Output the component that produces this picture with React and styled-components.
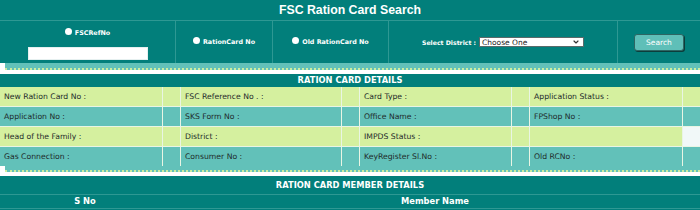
import styled, { createGlobalStyle } from 'styled-components';
import { ChevronDown } from 'lucide-react';

const GlobalStyle = createGlobalStyle`
  * { box-sizing: border-box; }
  body {
    margin: 0;
    background: #fff;
    font-family: 'DejaVu Sans', Verdana, sans-serif;
  }
`;

const Page = styled.div`
  width: 700px;
`;

const SearchPanel = styled.div`
  background: #027f7b;
`;

const Title = styled.h1`
  margin: 0;
  height: 21px;
  line-height: 20px;
  text-align: center;
  font-family: 'Liberation Sans', Arial, sans-serif;
  font-weight: 700;
  font-size: 12.3px;
  color: #fff;
  border-bottom: 1px solid #2e9893;
`;

const SearchRow = styled.div`
  display: grid;
  grid-template-columns: 176px 97px 116px 229px 82px;
  height: 42px;
`;

const SearchCell = styled.div`
  display: flex;
  flex-direction: column;
  align-items: center;
  justify-content: ${(p) => (p.$top ? 'flex-start' : 'center')};
  padding-top: ${(p) => (p.$top ? '7px' : '0')};
  gap: 9px;
  border-right: ${(p) => (p.$last ? 'none' : '1px solid #2e9893')};
`;

const RadioOption = styled.label`
  display: flex;
  align-items: center;
  gap: 3px;
  font-weight: 700;
  font-size: 6.4px;
  line-height: 8px;
  color: #fff;
`;

const Radio = styled.input`
  appearance: none;
  margin: 0 0 3px 0;
  width: 7px;
  height: 7px;
  border-radius: 50%;
  background: #fff;
`;

const RefInput = styled.input`
  width: 120px;
  height: 13px;
  margin: 0;
  border: 1px solid #e6f0f0;
  background: #fff;
`;

const DistrictPicker = styled.div`
  display: flex;
  align-items: center;
  gap: 3px;
`;

const FieldLabel = styled.span`
  font-weight: 700;
  font-size: 6.2px;
  color: #fff;
`;

const FakeSelect = styled.div`
  display: flex;
  align-items: center;
  justify-content: space-between;
  width: 105px;
  height: 10px;
  padding: 0 3px 0 2px;
  background: #fff;
  border: 1px solid #5a6a6a;
  font-size: 7.5px;
  color: #222;
`;

const SearchButton = styled.button`
  width: 50px;
  height: 17px;
  padding: 0;
  border: 1px solid #2d6663;
  border-radius: 3px;
  background: #5fbfb8;
  box-shadow: 1px 1px 0 #0c3d3b;
  font-family: 'DejaVu Sans', Verdana, sans-serif;
  font-size: 7.5px;
  color: #fff;
`;

const Band = styled.div`
  height: ${(p) => p.$h}px;
  margin: 0 0 4px 5px;
  background: #62c1b9;
  border-bottom: 2px dotted #cdeda0;
`;

const Caption = styled.div`
  height: ${(p) => p.$h}px;
  line-height: ${(p) => p.$h}px;
  background: #027f7b;
  text-align: center;
  font-weight: 700;
  font-size: 8.3px;
  color: #fff;
`;

const DetailsGrid = styled.div`
  display: grid;
  grid-template-columns: 162px 17px 160px 17px 151px 17px 152px 17px;
  grid-auto-rows: 19px;
  gap: 1px;
  background: #e9f5e4;
`;

const tones = {
  green: '#d5f09f',
  teal: '#62c1b9',
  blank: '#f1f8f8',
};

const Cell = styled.div`
  padding-left: 4px;
  line-height: 19px;
  background: ${(p) => tones[p.$tone]};
  font-size: 7.7px;
  color: #1e2a2a;
  white-space: nowrap;
`;

const MemberSection = styled.div`
  background: #027f7b;
  padding-bottom: 2px;
`;

const MemberHeader = styled.div`
  display: grid;
  grid-template-columns: 170px 530px;
  height: 15px;
  border-top: 1px solid #2e9893;
  border-bottom: 1px solid #2e9893;
`;

const HeaderCell = styled.div`
  text-align: center;
  line-height: 13px;
  font-weight: 700;
  font-size: 8.3px;
  color: #fff;
`;

const rows = [
  { tone: 'green', cells: ['New Ration Card No :', 'FSC Reference No . :', 'Card Type :', 'Application Status :'] },
  { tone: 'teal', cells: ['Application No :', 'SKS Form No :', 'Office Name :', 'FPShop No :'] },
  { tone: 'green', cells: ['Head of the Family :', 'District :', 'IMPDS Status :', ''], lastBlank: true },
  { tone: 'teal', cells: ['Gas Connection :', 'Consumer No :', 'KeyRegister Sl.No :', 'Old RCNo :'] },
];

const App = () => {
  return (
    <Page>
      <GlobalStyle />
      <SearchPanel>
        <Title>FSC Ration Card Search</Title>
        <SearchRow>
          <SearchCell $top>
            <RadioOption>
              <Radio type="radio" name="by" />
              FSCRefNo
            </RadioOption>
            <RefInput type="text" />
          </SearchCell>
          <SearchCell>
            <RadioOption>
              <Radio type="radio" name="by" />
              RationCard No
            </RadioOption>
          </SearchCell>
          <SearchCell>
            <RadioOption>
              <Radio type="radio" name="by" />
              Old RationCard No
            </RadioOption>
          </SearchCell>
          <SearchCell>
            <DistrictPicker>
              <FieldLabel>Select District :</FieldLabel>
              <FakeSelect>
                Choose One
                <ChevronDown size={8} strokeWidth={3.5} color="#333" />
              </FakeSelect>
            </DistrictPicker>
          </SearchCell>
          <SearchCell $last>
            <SearchButton>Search</SearchButton>
          </SearchCell>
        </SearchRow>
      </SearchPanel>
      <Band $h={7} />
      <Caption $h={13}>RATION CARD DETAILS</Caption>
      <DetailsGrid>
        {rows.map((row, r) =>
          row.cells.map((text, i) => [
            <Cell key={`${r}-${i}`} $tone={row.tone}>{text}</Cell>,
            <Cell
              key={`${r}-${i}-e`}
              $tone={row.lastBlank && i === 3 ? 'blank' : row.tone}
            />,
          ])
        )}
      </DetailsGrid>
      <Band $h={6} />
      <MemberSection>
        <Caption $h={18}>RATION CARD MEMBER DETAILS</Caption>
        <MemberHeader>
          <HeaderCell>S No</HeaderCell>
          <HeaderCell>Member Name</HeaderCell>
        </MemberHeader>
      </MemberSection>
    </Page>
  );
};

export default App;
